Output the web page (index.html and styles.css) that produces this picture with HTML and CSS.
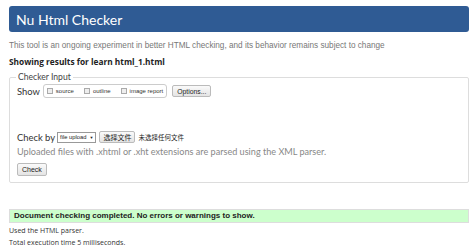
FILE: index.html
```html
<!DOCTYPE html>
<html>
<head>
<meta charset="utf-8">
<link rel="stylesheet" href="styles.css">
</head>
<body>
<div class="page">
  <header class="banner"><h1 class="title">Nu Html Checker</h1></header>
  <p class="intro">This tool is an ongoing experiment in better HTML checking, and its behavior remains subject to change</p>
  <p class="showing">Showing results for learn html_1.html</p>
  <fieldset class="input">
    <legend class="legend">Checker Input</legend>
    <div class="show-row">
      <span class="show-label">Show</span>
      <span class="opts">
        <label class="opt"><span class="cb"></span>source</label>
        <label class="opt"><span class="cb"></span>outline</label>
        <label class="opt"><span class="cb"></span>image report</label>
      </span>
      <span class="btn">Options...</span>
    </div>
    <div class="check-row">
      <span class="check-label">Check by</span>
      <span class="select">file upload <span class="arrow">▼</span></span>
      <span class="btn file-btn">选择文件</span>
      <span class="nofile">未选择任何文件</span>
    </div>
    <p class="hint">Uploaded files with .xhtml or .xht extensions are parsed using the XML parser.</p>
    <span class="btn check-btn">Check</span>
  </fieldset>
  <div class="success">Document checking completed. No errors or warnings to show.</div>
  <p class="meta">Used the HTML parser.</p>
  <p class="meta">Total execution time 5 milliseconds.</p>
</div>
</body>
</html>
```
FILE: styles.css
```css
html, body { margin: 0; padding: 0; background: #fff; }
body { font-family: "Liberation Sans", Arial, sans-serif; color: #222; }
.page { padding: 6px 5px 0 9px; }
.banner {
  background: #2f5b94;
  border-radius: 3px;
  height: 26px;
  display: flex;
  align-items: center;
  padding-left: 7px;
}
.title {
  margin: 0;
  font-family: "Lato", "Open Sans", sans-serif;
  font-weight: 400;
  font-size: 14px;
  color: #fff;
}
.intro {
  margin: 8px 0 0 0;
  font-size: 8.2px;
  line-height: 11px;
  color: #777;
}
.showing {
  margin: 5px 0 0 0;
  font-family: "Open Sans", sans-serif;
  font-weight: 700;
  font-size: 8.3px;
  line-height: 11px;
  color: #222;
}
.input {
  margin: 5px 0 0 0;
  border: 1px solid #ddd;
  border-radius: 2px;
  padding: 2px 7px 6px 7px;
}
.legend {
  font-family: "Lato", sans-serif;
  font-size: 8.6px;
  color: #444;
  padding: 0 2px;
  margin-left: -1px;
}
.show-row { display: flex; align-items: center; }
.show-label {
  font-family: "Lato", sans-serif;
  font-size: 9.4px;
  color: #333;
  margin-right: 3px;
}
.opts {
  display: flex;
  align-items: center;
  border: 1px solid #ccc;
  border-radius: 3px;
  height: 12px;
  padding: 0 3px 0 3px;
  gap: 10px;
}
.opt {
  display: flex;
  align-items: center;
  font-size: 6px;
  color: #333;
}
.cb {
  display: inline-block;
  width: 4px; height: 4px;
  border: 1px solid #aaa;
  background: #eee;
  margin-right: 3px;
}
.btn {
  display: inline-flex;
  align-items: center;
  border: 1px solid #bbb;
  border-radius: 2px;
  background: linear-gradient(#fafafa, #e4e4e4);
  font-size: 6.8px;
  color: #222;
  height: 10px;
  padding: 0 4px;
}
.show-row .btn { margin-left: 5px; }
.check-row {
  display: flex;
  align-items: center;
  margin-top: 33px;
}
.check-label {
  font-family: "Lato", sans-serif;
  font-size: 9.4px;
  color: #333;
  margin-right: 2px;
}
.select {
  display: inline-flex;
  align-items: center;
  border: 1px solid #999;
  height: 9px;
  padding: 0 2px;
  font-size: 5.8px;
  color: #222;
  background: #fff;
}
.arrow { font-size: 4px; margin-left: 3px; }
.file-btn { margin-left: 3px; font-family: "Noto Sans CJK SC", sans-serif; font-size: 7px; padding: 0 3px; }
.nofile { margin-left: 3px; font-family: "Noto Sans CJK SC", sans-serif; font-size: 6.5px; color: #222; }
.hint {
  margin: 2px 0 0 0;
  font-family: "Lato", sans-serif;
  font-size: 9.1px;
  line-height: 13px;
  color: #888;
}
.check-btn { margin-top: 2px; font-size: 7px; padding: 0 4px; height: 11px; }
.success {
  margin-top: 26px;
  background: #ccffcc;
  border: 1px solid #ddd;
  height: 12px;
  line-height: 12px;
  padding-left: 4px;
  font-weight: 700;
  font-size: 8px;
  color: #222;
}
.meta {
  margin: 3px 0 0 0;
  font-family: "Open Sans", sans-serif;
  font-size: 7px;
  line-height: 9px;
  color: #333;
}
.meta + .meta { margin-top: 3px; }
```
